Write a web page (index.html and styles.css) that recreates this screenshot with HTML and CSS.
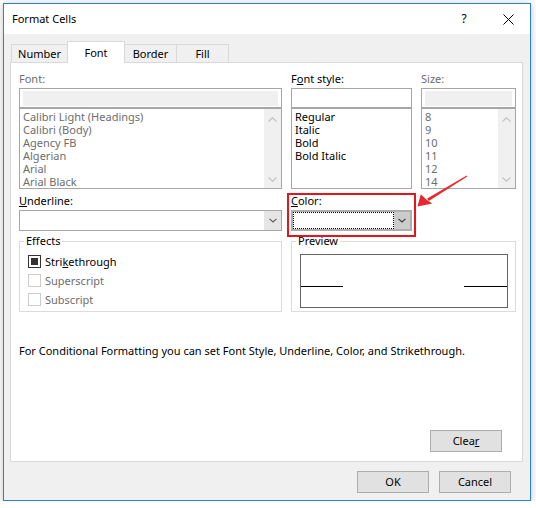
FILE: index.html
```html
<!DOCTYPE html>
<html lang="en">
<head>
<meta charset="utf-8">
<title>Format Cells</title>
<link rel="stylesheet" href="styles.css">
</head>
<body>
<div class="dialog">
  <div class="titlebar">
    <span class="title">Format Cells</span>
    <span class="tbtn help">?</span>
    <span class="tbtn close"><svg width="11" height="11" viewBox="0 0 11 11"><path d="M0.5 0.5L10.5 10.5M10.5 0.5L0.5 10.5" stroke="#000" stroke-width="1" fill="none"/></svg></span>
  </div>
  <div class="body">
    <div class="tabs">
      <div class="tab t-number">Number</div>
      <div class="tab tab-active t-font">Font</div>
      <div class="tab t-border">Border</div>
      <div class="tab t-fill">Fill</div>
    </div>
    <div class="panel">
      <div class="grid">
        <div class="field w1">
          <div class="label disabled">Font:</div>
          <div class="textbox tb-off"><div class="fill"></div></div>
          <div class="list">
            <div class="items disabled">
              <div>Calibri Light (Headings)</div>
              <div>Calibri (Body)</div>
              <div>Agency FB</div>
              <div>Algerian</div>
              <div>Arial</div>
              <div>Arial Black</div>
            </div>
            <div class="vscroll">
              <svg width="9" height="5" viewBox="0 0 9 5"><path d="M0.5 4.5L4.5 0.8L8.5 4.5" stroke="#c4c4c4" stroke-width="1.3" fill="none"/></svg>
              <svg width="9" height="5" viewBox="0 0 9 5"><path d="M0.5 0.5L4.5 4.2L8.5 0.5" stroke="#c4c4c4" stroke-width="1.3" fill="none"/></svg>
            </div>
          </div>
        </div>
        <div class="field w2">
          <div class="label">F<u>o</u>nt style:</div>
          <div class="textbox"></div>
          <div class="list">
            <div class="items">
              <div>Regular</div>
              <div>Italic</div>
              <div>Bold</div>
              <div>Bold Italic</div>
            </div>
          </div>
        </div>
        <div class="field w3">
          <div class="label disabled">Size:</div>
          <div class="textbox tb-off"><div class="fill"></div></div>
          <div class="list">
            <div class="items disabled">
              <div>8</div>
              <div>9</div>
              <div>10</div>
              <div>11</div>
              <div>12</div>
              <div>14</div>
            </div>
            <div class="vscroll">
              <svg width="9" height="5" viewBox="0 0 9 5"><path d="M0.5 4.5L4.5 0.8L8.5 4.5" stroke="#c4c4c4" stroke-width="1.3" fill="none"/></svg>
              <svg width="9" height="5" viewBox="0 0 9 5"><path d="M0.5 0.5L4.5 4.2L8.5 0.5" stroke="#c4c4c4" stroke-width="1.3" fill="none"/></svg>
            </div>
          </div>
        </div>

        <div class="field w1">
          <div class="label"><u>U</u>nderline:</div>
          <div class="combo">
            <div class="ddbtn"><svg width="8" height="5" viewBox="0 0 8 5"><path d="M0.5 0.8L4 4L7.5 0.8" stroke="#5a5a5a" stroke-width="1.1" fill="none"/></svg></div>
          </div>
        </div>
        <div class="field w2c">
          <div class="label"><u>C</u>olor:</div>
          <div class="combo combo-focus">
            <div class="focusrect"></div>
            <div class="ddbtn ddbtn-hot"><svg width="8" height="5" viewBox="0 0 8 5"><path d="M0.5 0.8L4 4L7.5 0.8" stroke="#333" stroke-width="1.1" fill="none"/></svg></div>
          </div>
        </div>

        <fieldset class="group effects">
          <legend>Effects</legend>
          <div class="check-row"><span class="cb cb-on"><span class="mark"></span></span><span>Stri<u>k</u>ethrough</span></div>
          <div class="check-row disabled"><span class="cb"></span><span>Superscript</span></div>
          <div class="check-row disabled"><span class="cb"></span><span>Subscript</span></div>
        </fieldset>
        <fieldset class="group preview">
          <legend>Preview</legend>
          <div class="preview-box">
            <div class="pline pl-left"></div>
            <div class="pline pl-right"></div>
          </div>
        </fieldset>
      </div>
      <p class="note">For Conditional Formatting you can set Font Style, Underline, Color, and Strikethrough.</p>
      <div class="panel-actions"><button class="btn">Clea<u>r</u></button></div>
    </div>
    <div class="footer">
      <button class="btn">OK</button>
      <button class="btn">Cancel</button>
    </div>
  </div>
  <div class="annot-box"></div>
  <svg class="annot-arrow" width="65" height="45" viewBox="410 170 65 45">
    <polygon points="467.3,176.5 466.7,175.5 427.2,198.4 428.8,201" fill="#e8262b"/>
    <polygon points="417.5,206.5 420.8,194.2 426.6,199.8 432.3,203.6" fill="#e8262b"/>
  </svg>
</div>
</body>
</html>
```
FILE: styles.css
```css
* { box-sizing: border-box; }
html, body { margin: 0; padding: 0; background: #fff; }
body {
  font-family: "Noto Sans", "Open Sans", sans-serif;
  font-size: 11px;
  color: #000;
}
u { text-decoration: underline; text-underline-offset: 1px; }

.dialog {
  position: relative;
  width: 528px;
  height: 498px;
  margin: 3px 0 0 3px;
  border: 1px solid #2a80d3;
  background: #f0f0f0;
  box-shadow: 0 1px 7px rgba(0, 0, 0, 0.25);
  display: flex;
  flex-direction: column;
}

.titlebar {
  height: 30px;
  background: #fff;
  display: flex;
  align-items: center;
  line-height: 30px;
}
.title { flex: 1; padding-left: 8px; }
.tbtn {
  width: 44px;
  height: 30px;
  display: flex;
  align-items: center;
  justify-content: center;
}
.help { font-size: 12px; }

.body {
  flex: 1;
  padding: 7px 7px 0 6px;
  display: flex;
  flex-direction: column;
}

.tabs {
  display: flex;
  align-items: flex-end;
  margin-left: 1px;
  height: 21px;
}
.tab {
  height: 18px;
  border: 1px solid #d9d9d9;
  border-bottom: 0;
  margin-right: -1px;
  text-align: center;
  line-height: 17px;
  background: #f0f0f0;
}
.tab-active {
  height: 22px;
  line-height: 21px;
  background: #fff;
  margin-bottom: -1px;
  position: relative;
  z-index: 1;
}
.t-number { width: 57px; }
.t-font { width: 58px; }
.t-border { width: 53px; }
.t-fill { width: 53px; }

.panel {
  height: 400px;
  background: #fff;
  border: 1px solid #d9d9d9;
  padding: 8px 6px 9px 8px;
  display: flex;
  flex-direction: column;
}

.grid {
  display: grid;
  grid-template-columns: 272px 130px 95px;
  row-gap: 4px;
}
.w1 { width: 263px; }
.w2 { width: 121px; }
.w2c { width: 121px; }
.w3 { width: 95px; }

.label { line-height: 15px; margin-bottom: 2px; white-space: nowrap; }
.disabled { color: #6d6d6d; }

.textbox {
  height: 20px;
  border: 1px solid #a6a6a6;
  background: #fff;
}
.tb-off { padding: 2px 3px 1px; }
.fill { height: 100%; background: #f0f0f0; }

.list {
  height: 81px;
  border: 1px solid #a6a6a6;
  background: #fff;
  display: flex;
  overflow: hidden;
}
.items {
  flex: 1;
  padding: 1px 0 0 3px;
  line-height: 13px;
  white-space: nowrap;
  overflow: hidden;
}
.vscroll {
  width: 17px;
  background: #f0f0f0;
  display: flex;
  flex-direction: column;
  justify-content: space-between;
  align-items: center;
  padding: 8px 0 6px;
}
.vscroll svg { display: block; }

.combo {
  height: 21px;
  border: 1px solid #a6a6a6;
  background: #fff;
  display: flex;
}
.ddbtn {
  margin-left: auto;
  width: 17px;
  background: #e5e5e5;
  display: flex;
  align-items: center;
  justify-content: center;
}
.ddbtn svg { display: block; }
.combo-focus { border: 2px solid #adadad; }
.focusrect { flex: 1; border: 1px dotted #000; }
.ddbtn-hot { width: 16px; background: #cccccc; }

.group {
  margin: 0;
  min-width: 0;
  border: 1px solid #dcdcdc;
}
.group legend {
  line-height: 12px;
  padding: 0 2px;
  margin-left: -4px;
}
.effects { padding: 5px 0 2px 8px; grid-column: 1; width: 263px; }
.preview { padding: 7px 7px 3px 8px; grid-column: 2 / 4; width: 225px; }

.check-row {
  display: flex;
  align-items: center;
  height: 19px;
  white-space: nowrap;
}
.cb {
  width: 13px;
  height: 13px;
  border: 1px solid #cccccc;
  background: #fff;
  margin-right: 4px;
  flex: none;
}
.cb-on { border-color: #333; padding: 2px; }
.mark { display: block; width: 7px; height: 7px; background: #333; }

.preview-box {
  height: 54px;
  border: 1px solid #646464;
  display: flex;
  justify-content: space-between;
  align-items: flex-start;
  padding-top: 31px;
}
.pline { height: 1px; background: #000; }
.pl-left { width: 42px; }
.pl-right { width: 43px; }

.note { margin: 31px 0 0; line-height: 15px; white-space: nowrap; }

.panel-actions {
  margin-top: auto;
  display: flex;
  justify-content: flex-end;
  padding-right: 14px;
}

.btn {
  width: 72px;
  height: 22px;
  background: #e1e1e1;
  border: 1px solid #adadad;
  font: inherit;
  color: #000;
  padding: 0;
  line-height: 20px;
}

.footer {
  display: flex;
  justify-content: flex-end;
  gap: 10px;
  padding: 9px 12px 0 0;
}

.annot-box {
  position: absolute;
  left: 283px;
  top: 189px;
  width: 129px;
  height: 44px;
  border: 2px solid #e8141b;
  z-index: 2;
}
.annot-arrow {
  position: absolute;
  left: 406px;
  top: 166px;
  z-index: 2;
}
```
